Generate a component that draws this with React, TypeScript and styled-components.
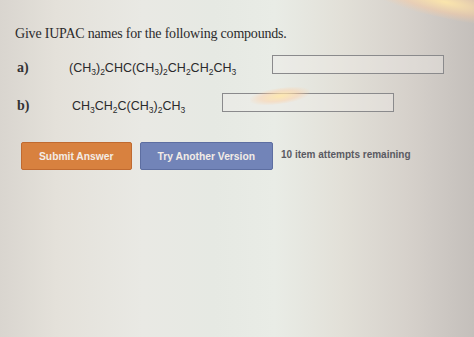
import * as React from 'react'
import styled, { createGlobalStyle } from 'styled-components'

const Global = createGlobalStyle`
  html, body {
    margin: 0;
    padding: 0;
  }
  body {
    width: 474px;
    height: 337px;
    overflow: hidden;
    background: linear-gradient(
      90deg,
      #d9d5cf 0%,
      #e4e1da 12%,
      #e9e9e4 30%,
      #e6e9e3 45%,
      #e9ece6 58%,
      #e2e0d8 72%,
      #d6d1cb 86%,
      #c4bfbb 100%
    );
  }
`

const Page = styled.div`
  position: relative;
  height: 337px;
  padding: 26px 0 0 15px;
  box-sizing: border-box;
  overflow: hidden;
`

const Glare = styled.div<{ $top: number; $left: number; $w: number; $h: number; $rot: number }>`
  position: absolute;
  top: ${p => p.$top}px;
  left: ${p => p.$left}px;
  width: ${p => p.$w}px;
  height: ${p => p.$h}px;
  transform: rotate(${p => p.$rot}deg);
  background: radial-gradient(ellipse at center, rgba(255, 232, 170, 0.9) 0%, rgba(255, 205, 160, 0.45) 45%, rgba(255, 205, 170, 0) 75%);
  pointer-events: none;
`

const Heading = styled.div`
  font-family: 'Liberation Serif', 'Times New Roman', serif;
  font-size: 14px;
  letter-spacing: -0.2px;
  color: #2c2b2c;
`

const List = styled.div`
  display: flex;
  flex-direction: column;
  gap: 22px;
  margin-top: 18px;
`

const Row = styled.div`
  display: flex;
  align-items: center;
`

const Label = styled.span`
  width: 52px;
  padding-left: 2px;
  font-family: 'Liberation Serif', 'Times New Roman', serif;
  font-weight: bold;
  font-size: 14px;
  color: #333;
`

const Formula = styled.span<{ $indent: number }>`
  margin-left: ${p => p.$indent}px;
  font-family: 'Liberation Sans', Arial, sans-serif;
  font-size: 12.5px;
  color: #2a2a2c;
  sub {
    font-size: 8.5px;
    vertical-align: -3px;
    line-height: 0;
  }
`

const Field = styled.div<{ $gap: number; $width: number }>`
  margin: -8px 0 0 ${p => p.$gap}px;
  width: ${p => p.$width}px;
  height: 17px;
  border: 1px solid #8a8a8c;
  background: rgba(240, 238, 234, 0.35);
`

const Actions = styled.div`
  display: flex;
  align-items: center;
  gap: 8px;
  margin-top: 28px;
  padding-left: 6px;
`

const Button = styled.div<{ $tone: 'orange' | 'blue' }>`
  display: flex;
  align-items: center;
  justify-content: center;
  height: 26px;
  padding: 0 17px;
  border-radius: 2px;
  font-family: 'Liberation Sans', Arial, sans-serif;
  font-weight: bold;
  font-size: 10.3px;
  color: #f3ece6;
  background: ${p => (p.$tone === 'orange' ? '#d8813f' : '#7284b8')};
  border: 1px solid ${p => (p.$tone === 'orange' ? '#c06a30' : '#5d6ea1')};
`

const Remaining = styled.span`
  margin-top: -3px;
  font-family: 'Liberation Sans', Arial, sans-serif;
  font-weight: bold;
  font-size: 10px;
  color: #5a5a62;
`

export default function App() {
  return (
    <>
      <Global />
      <Page>
        <Glare $top={-14} $left={370} $w={150} $h={32} $rot={12} />
        <Glare $top={88} $left={250} $w={60} $h={16} $rot={-8} />
        <Heading>Give IUPAC names for the following compounds.</Heading>
        <List>
          <Row>
            <Label>a)</Label>
            <Formula $indent={0}>
              (CH<sub>3</sub>)<sub>2</sub>CHC(CH<sub>3</sub>)<sub>2</sub>CH<sub>2</sub>CH<sub>2</sub>CH<sub>3</sub>
            </Formula>
            <Field $gap={36} $width={170} />
          </Row>
          <Row>
            <Label>b)</Label>
            <Formula $indent={3}>
              CH<sub>3</sub>CH<sub>2</sub>C(CH<sub>3</sub>)<sub>2</sub>CH<sub>3</sub>
            </Formula>
            <Field $gap={37} $width={170} />
          </Row>
        </List>
        <Actions>
          <Button $tone="orange">Submit Answer</Button>
          <Button $tone="blue">Try Another Version</Button>
          <Remaining>10 item attempts remaining</Remaining>
        </Actions>
      </Page>
    </>
  )
}
